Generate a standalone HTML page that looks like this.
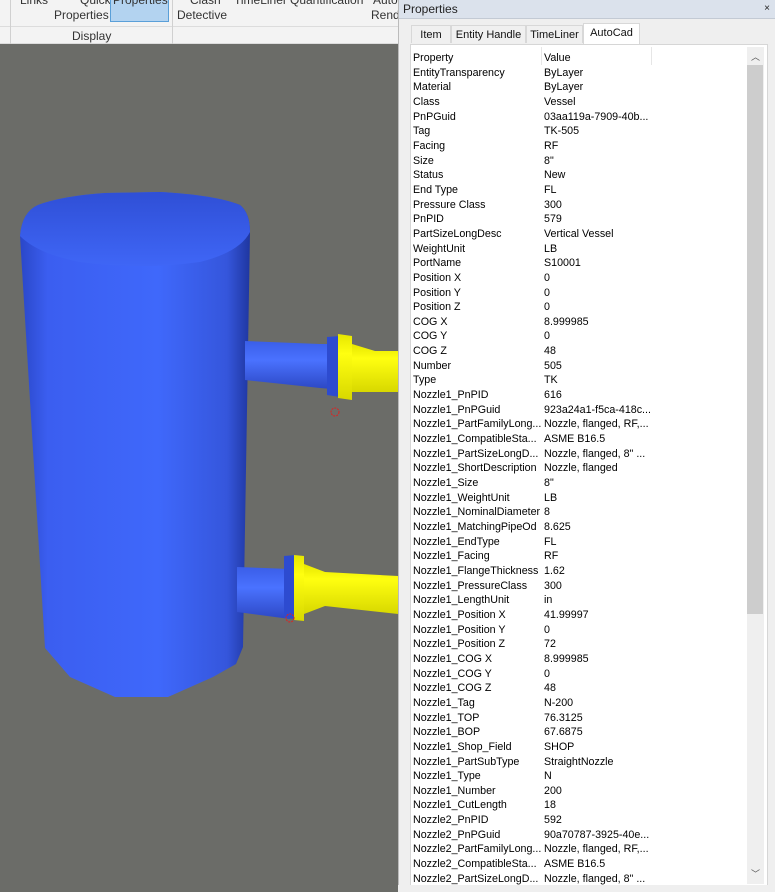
<!DOCTYPE html>
<html><head><style>
*{margin:0;padding:0;box-sizing:border-box}
body{width:775px;height:892px;overflow:hidden;background:#6b6c68;font-family:"Liberation Sans",Arial,sans-serif;position:relative}
.rib{position:absolute;left:0;top:0;width:398px;height:44px;background:#f3f3f3;border-bottom:1px solid #dcdcdc}
.rib span{position:absolute;font-size:12px;color:#333;white-space:nowrap}
.panel{position:absolute;left:398px;top:0;width:377px;height:892px;background:#efefef;border-left:1px solid #bbb}
.title{position:absolute;left:0;top:0;width:377px;height:19px;background:#dbe2ec;border-bottom:1px solid #c3cad4;font-size:12px;color:#222;padding:2px 0 0 4px}
.tab{position:absolute;top:25px;height:18px;font-size:11px;color:#111;padding:3px 0 0 0;text-align:center;border:1px solid #d8d8d8;border-bottom:none;background:#f0f0f0}
.box{position:absolute;left:410px;top:44px;width:358px;height:843px;background:#fff;border:1px solid #d6d6d6}
.rows{position:absolute;left:413px;top:51px;font-size:10.7px;color:#000;line-height:14.67px}
.r{height:14.67px;white-space:nowrap;position:relative}
.r b{font-weight:normal;position:absolute;left:0}
.r i{font-style:normal;position:absolute;left:131px}
.sb{position:absolute;left:747px;top:47px;width:17px;height:837px;background:#efefef}
</style></head><body>
<svg style="position:absolute;left:0;top:0" width="398" height="892">
<defs>
<linearGradient id="vg" x1="0" x2="1"><stop offset="0" stop-color="#2a47c8"/><stop offset="0.12" stop-color="#3b5ef0"/><stop offset="0.6" stop-color="#3f68fb"/><stop offset="0.9" stop-color="#3556dc"/><stop offset="1" stop-color="#1f36a0"/></linearGradient>
<linearGradient id="tg" x1="0" y1="0" x2="0" y2="1"><stop offset="0" stop-color="#2f4fd6"/><stop offset="1" stop-color="#3f66f6"/></linearGradient>
<linearGradient id="ng" x1="0" y1="0" x2="0" y2="1"><stop offset="0" stop-color="#3a5ee8"/><stop offset="0.4" stop-color="#4a72ff"/><stop offset="1" stop-color="#2d48c4"/></linearGradient>
<linearGradient id="yg" x1="0" y1="0" x2="0" y2="1"><stop offset="0" stop-color="#e6e600"/><stop offset="0.3" stop-color="#ffff10"/><stop offset="1" stop-color="#d8d800"/></linearGradient>
</defs>
<path d="M20 236 Q22 212 38 205 Q62 196 105 193 L160 192 Q215 195 240 205 Q250 213 250 232 L243 647 L236 664 L213 677 L168 697 L115 697 L70 677 L45 648 Z" fill="url(#vg)"/>
<path d="M20 236 Q22 212 38 205 Q62 196 105 193 L160 192 Q215 195 240 205 Q250 213 250 232 Q240 252 200 262 Q140 270 80 262 Q38 254 20 236 Z" fill="url(#tg)"/>
<path d="M245 341 L320 344 L332 344 L332 389 L320 388 L245 380 Z" fill="url(#ng)"/>
<path d="M327 337 L340 336 L340 397 L327 395 Z" fill="#2d4bd0"/>
<path d="M338 334 L352 336 L352 400 L338 398 Z" fill="url(#yg)"/>
<path d="M352 344 L375 351 L398 351 L398 392 L375 392 L352 392 Z" fill="url(#yg)"/>
<path d="M237 567 L290 569 L290 619 L237 612 Z" fill="url(#ng)"/>
<path d="M284 556 L296 555 L296 619 L284 618 Z" fill="#2d4bd0"/>
<path d="M294 555 L304 556 L304 621 L294 620 Z" fill="url(#yg)"/>
<path d="M304 564 L325 572 L398 576 L398 614 L325 606 L304 614 Z" fill="url(#yg)"/>
<circle cx="335" cy="412" r="4" fill="none" stroke="#d22" stroke-width="1" stroke-dasharray="2 1"/>
<circle cx="290" cy="618" r="4" fill="none" stroke="#d22" stroke-width="1" stroke-dasharray="2 1"/>
</svg>
<div class="rib">
<span style="left:20px;top:-7px">Links</span>
<span style="left:80px;top:-7px">Quick</span>
<span style="left:54px;top:8px">Properties</span>
<div style="position:absolute;left:110px;top:-2px;width:59px;height:24px;background:#b3d3f0;border:1px solid #5a9fd8"></div>
<span style="left:113px;top:-7px">Properties</span>
<span style="left:190px;top:-7px">Clash</span>
<span style="left:177px;top:8px">Detective</span>
<span style="left:234px;top:-7px">TimeLiner</span>
<span style="left:290px;top:-7px">Quantification</span>
<span style="left:373px;top:-7px">Auto</span>
<span style="left:371px;top:8px">Rend</span>
<div style="position:absolute;left:0;top:26px;width:398px;height:1px;background:#dcdcdc"></div>
<span style="left:72px;top:29px">Display</span>
<div style="position:absolute;left:10px;top:0;width:1px;height:44px;background:#d0d0d0"></div>
<div style="position:absolute;left:172px;top:0;width:1px;height:44px;background:#d0d0d0"></div>
</div>
<div class="panel">
<div class="title">Properties<span style="position:absolute;right:6px;top:3px;font-size:10px">×</span></div>
<div class="tab" style="left:12px;width:40px">Item</div>
<div class="tab" style="left:52px;width:75px">Entity Handle</div>
<div class="tab" style="left:127px;width:57px">TimeLiner</div>
<div class="tab" style="left:184px;width:57px;top:23px;height:21px;background:#fff">AutoCad</div>
</div>
<div class="box"></div>
<div style="position:absolute;left:541px;top:47px;width:1px;height:18px;background:#e6e6e6"></div>
<div style="position:absolute;left:651px;top:47px;width:1px;height:18px;background:#e6e6e6"></div>
<div class="sb"><div style="position:absolute;left:0;top:18px;width:16px;height:549px;background:#cdcdcd"></div>
<div style="position:absolute;left:4px;top:3px;font-size:9px;color:#555">︿</div>
<div style="position:absolute;left:4px;top:820px;font-size:9px;color:#555">﹀</div></div>
<div class="rows">
<div class="r"><b>Property</b><i>Value</i></div>
<div class="r"><b>EntityTransparency</b><i>ByLayer</i></div>
<div class="r"><b>Material</b><i>ByLayer</i></div>
<div class="r"><b>Class</b><i>Vessel</i></div>
<div class="r"><b>PnPGuid</b><i>03aa119a-7909-40b...</i></div>
<div class="r"><b>Tag</b><i>TK-505</i></div>
<div class="r"><b>Facing</b><i>RF</i></div>
<div class="r"><b>Size</b><i>8"</i></div>
<div class="r"><b>Status</b><i>New</i></div>
<div class="r"><b>End Type</b><i>FL</i></div>
<div class="r"><b>Pressure Class</b><i>300</i></div>
<div class="r"><b>PnPID</b><i>579</i></div>
<div class="r"><b>PartSizeLongDesc</b><i>Vertical Vessel</i></div>
<div class="r"><b>WeightUnit</b><i>LB</i></div>
<div class="r"><b>PortName</b><i>S10001</i></div>
<div class="r"><b>Position X</b><i>0</i></div>
<div class="r"><b>Position Y</b><i>0</i></div>
<div class="r"><b>Position Z</b><i>0</i></div>
<div class="r"><b>COG X</b><i>8.999985</i></div>
<div class="r"><b>COG Y</b><i>0</i></div>
<div class="r"><b>COG Z</b><i>48</i></div>
<div class="r"><b>Number</b><i>505</i></div>
<div class="r"><b>Type</b><i>TK</i></div>
<div class="r"><b>Nozzle1_PnPID</b><i>616</i></div>
<div class="r"><b>Nozzle1_PnPGuid</b><i>923a24a1-f5ca-418c...</i></div>
<div class="r"><b>Nozzle1_PartFamilyLong...</b><i>Nozzle, flanged, RF,...</i></div>
<div class="r"><b>Nozzle1_CompatibleSta...</b><i>ASME B16.5</i></div>
<div class="r"><b>Nozzle1_PartSizeLongD...</b><i>Nozzle, flanged, 8" ...</i></div>
<div class="r"><b>Nozzle1_ShortDescription</b><i>Nozzle, flanged</i></div>
<div class="r"><b>Nozzle1_Size</b><i>8"</i></div>
<div class="r"><b>Nozzle1_WeightUnit</b><i>LB</i></div>
<div class="r"><b>Nozzle1_NominalDiameter</b><i>8</i></div>
<div class="r"><b>Nozzle1_MatchingPipeOd</b><i>8.625</i></div>
<div class="r"><b>Nozzle1_EndType</b><i>FL</i></div>
<div class="r"><b>Nozzle1_Facing</b><i>RF</i></div>
<div class="r"><b>Nozzle1_FlangeThickness</b><i>1.62</i></div>
<div class="r"><b>Nozzle1_PressureClass</b><i>300</i></div>
<div class="r"><b>Nozzle1_LengthUnit</b><i>in</i></div>
<div class="r"><b>Nozzle1_Position X</b><i>41.99997</i></div>
<div class="r"><b>Nozzle1_Position Y</b><i>0</i></div>
<div class="r"><b>Nozzle1_Position Z</b><i>72</i></div>
<div class="r"><b>Nozzle1_COG X</b><i>8.999985</i></div>
<div class="r"><b>Nozzle1_COG Y</b><i>0</i></div>
<div class="r"><b>Nozzle1_COG Z</b><i>48</i></div>
<div class="r"><b>Nozzle1_Tag</b><i>N-200</i></div>
<div class="r"><b>Nozzle1_TOP</b><i>76.3125</i></div>
<div class="r"><b>Nozzle1_BOP</b><i>67.6875</i></div>
<div class="r"><b>Nozzle1_Shop_Field</b><i>SHOP</i></div>
<div class="r"><b>Nozzle1_PartSubType</b><i>StraightNozzle</i></div>
<div class="r"><b>Nozzle1_Type</b><i>N</i></div>
<div class="r"><b>Nozzle1_Number</b><i>200</i></div>
<div class="r"><b>Nozzle1_CutLength</b><i>18</i></div>
<div class="r"><b>Nozzle2_PnPID</b><i>592</i></div>
<div class="r"><b>Nozzle2_PnPGuid</b><i>90a70787-3925-40e...</i></div>
<div class="r"><b>Nozzle2_PartFamilyLong...</b><i>Nozzle, flanged, RF,...</i></div>
<div class="r"><b>Nozzle2_CompatibleSta...</b><i>ASME B16.5</i></div>
<div class="r"><b>Nozzle2_PartSizeLongD...</b><i>Nozzle, flanged, 8" ...</i></div>
</div>
<div style="position:absolute;left:398px;top:885px;width:377px;height:7px;background:#efefef"></div>
</body></html>
